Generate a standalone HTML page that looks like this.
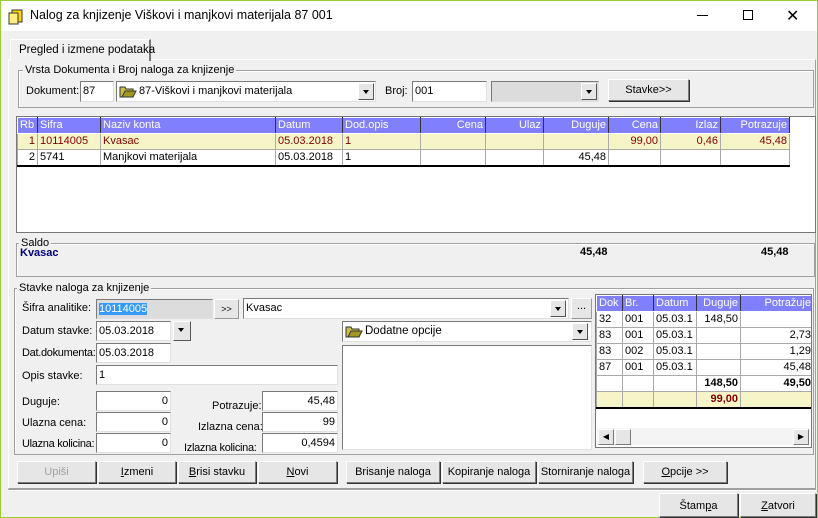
<!DOCTYPE html>
<html><head><meta charset="utf-8"><style>
*{box-sizing:border-box;margin:0;padding:0}
body{width:818px;height:518px;overflow:hidden;background:#f0f0f0;font-family:"Liberation Sans",Arial,sans-serif;font-size:11px;color:#000;position:relative}
.a{position:absolute;white-space:nowrap}
.win{position:absolute;left:0;top:0;width:818px;height:518px;border:1px solid #9acd32;border-top:none}
.tb{position:absolute;left:0;top:0;width:818px;height:31px;background:#fff;border-top:1px solid #9acd32}
.in{position:absolute;background:#fff;border:1px solid #7a7a7a;border-right-color:#e0e0e0;border-bottom-color:#e0e0e0;padding:1px 2px;line-height:16px;white-space:nowrap;overflow:hidden}
.r{text-align:right}
.btn{position:absolute;background:#e6e6e6;border:1px solid #fff;border-right-color:#7a7a7a;border-bottom-color:#7a7a7a;box-shadow:1px 1px 0 #333;text-align:center;line-height:20px;white-space:nowrap;overflow:hidden}
.grp{position:absolute;border:1px solid #a0a0a0;box-shadow:1px 1px 0 #fff inset}
.gl{position:absolute;background:#f0f0f0;padding:0 2px;top:-8px;left:4px;line-height:14px}
.dd{position:absolute;width:16px;background:#e6e6e6;border:1px solid #fff;border-right-color:#555;border-bottom-color:#555}
.dd:after{content:"";position:absolute;left:4px;top:6px;border:3px solid transparent;border-top:4px solid #000}
table{border-collapse:collapse;position:absolute;font-size:11px}
td{border:1px solid #aaa;padding:0 2px;height:16px;line-height:15px;white-space:nowrap;overflow:hidden}
tr.h td{background:#8080ff;color:#fff;border:1px solid #fff;border-right-color:#333}
tr.y td{background:#f5f5c8;color:#800000}
u{text-decoration:underline}
</style></head><body>
<div class="tb"></div>
<svg class="a" style="left:8px;top:9px" width="16" height="16"><rect x="4" y="1" width="10" height="12" fill="#ffd700" stroke="#333"/><rect x="1" y="4" width="9" height="11" fill="#ffef80" stroke="#333"/></svg>
<div class="a" style="left:30px;top:8px;font-size:12.5px">Nalog za knjizenje Viškovi i manjkovi materijala 87 001</div>
<div class="a" style="left:697px;top:15px;width:11px;height:1px;background:#000"></div>
<div class="a" style="left:743px;top:10px;width:10px;height:10px;border:1px solid #000"></div>
<div class="a" style="left:786px;top:6px;font-size:16px">✕</div>
<div class="win"></div>
<!-- tab -->
<div class="a" style="left:8px;top:59px;width:808px;height:430px;border:1px solid #fff;border-right-color:#a0a0a0;border-bottom-color:#a0a0a0"></div>
<div class="a" style="left:10px;top:39px;width:141px;height:22px;background:#f0f0f0;border:1px solid #fff;border-right:2px solid #777;border-bottom:none;padding:4px 0 0 8px;font-size:11.5px">Pregled i izmene podataka</div>
<!-- group 1 -->
<div class="grp" style="left:18px;top:70px;width:796px;height:38px"><div class="gl">Vrsta Dokumenta i Broj naloga za knjizenje</div></div>
<div class="a" style="left:26px;top:85px">Dokument:</div>
<div class="in" style="left:80px;top:81px;width:34px;height:21px">87</div>
<div class="in" style="left:116px;top:81px;width:260px;height:21px;padding-left:22px;line-height:17px">87-Viškovi i manjkovi materijala</div>
<svg class="a" style="left:119px;top:84px" width="18" height="14"><path d="M1 3h5l1 2h7v8H1z" fill="#c8c040" stroke="#333"/><path d="M3 13l3-6h11l-3 6z" fill="#a09820" stroke="#333"/></svg>
<div class="dd" style="left:358px;top:83px;height:17px"></div>
<div class="a" style="left:385px;top:85px">Broj:</div>
<div class="in" style="left:412px;top:81px;width:75px;height:21px">001</div>
<div class="in" style="left:491px;top:81px;width:108px;height:21px;background:#dcdcdc"></div>
<div class="dd" style="left:581px;top:83px;height:17px"></div>
<div class="btn" style="left:608px;top:79px;width:81px;height:22px">Stavke&gt;&gt;</div>
<!-- grid -->
<div class="a" style="left:16px;top:116px;width:800px;height:117px;background:#fff;border:1px solid #777"></div>
<table style="left:17px;top:117px;table-layout:fixed;width:772px">
<colgroup><col style="width:20px"><col style="width:63px"><col style="width:175px"><col style="width:67px"><col style="width:78px"><col style="width:65px"><col style="width:58px"><col style="width:65px"><col style="width:52px"><col style="width:60px"><col style="width:69px"></colgroup>
<tr class="h"><td>Rb</td><td>Sifra</td><td>Naziv konta</td><td>Datum</td><td>Dod.opis</td><td class="r">Cena</td><td class="r">Ulaz</td><td class="r">Duguje</td><td class="r">Cena</td><td class="r">Izlaz</td><td class="r">Potrazuje</td></tr>
<tr class="y"><td class="r">1</td><td>10114005</td><td>Kvasac</td><td>05.03.2018</td><td>1</td><td></td><td></td><td></td><td class="r">99,00</td><td class="r">0,46</td><td class="r">45,48</td></tr>
<tr style="border-bottom:2px solid #000"><td class="r">2</td><td>5741</td><td>Manjkovi materijala</td><td>05.03.2018</td><td>1</td><td></td><td></td><td class="r">45,48</td><td></td><td></td><td></td></tr>
</table>
<!-- saldo -->
<div class="grp" style="left:16px;top:243px;width:799px;height:34px"><div class="gl" style="left:2px">Saldo</div></div>
<div class="a" style="left:20px;top:247px;color:#000080;font-weight:bold">Kvasac</div>
<div class="a" style="left:580px;top:246px;font-weight:bold">45,48</div>
<div class="a" style="left:761px;top:246px;font-weight:bold">45,48</div>
<!-- stavke -->
<div class="grp" style="left:14px;top:288px;width:800px;height:167px"><div class="gl" style="left:2px">Stavke naloga za knjizenje</div></div>
<div class="a" style="left:22px;top:302px">Šifra analitike:</div>
<div class="in" style="left:96px;top:299px;width:117px;height:20px;background:#dcdcdc"><span style="background:#3399ff;color:#fff">10114005</span></div>
<div class="btn" style="left:214px;top:299px;width:25px;height:20px;font-size:9px;line-height:18px;box-shadow:none;border-color:#fff #999 #999 #fff">&gt;&gt;</div>
<div class="in" style="left:243px;top:298px;width:326px;height:21px">Kvasac</div>
<div class="dd" style="left:550px;top:300px;height:17px"></div>
<div class="btn" style="left:571px;top:298px;width:21px;height:21px;box-shadow:none;border-color:#fff #999 #999 #fff;line-height:14px">...</div>
<div class="a" style="left:22px;top:325px">Datum stavke:</div>
<div class="in" style="left:96px;top:321px;width:75px;height:20px">05.03.2018</div>
<div class="dd" style="left:173px;top:321px;height:20px;width:18px"></div>
<div class="a" style="left:22px;top:347px;letter-spacing:-0.3px">Dat.dokumenta:</div>
<div class="in" style="left:96px;top:343px;width:75px;height:20px">05.03.2018</div>
<div class="a" style="left:22px;top:370px">Opis stavke:</div>
<div class="in" style="left:96px;top:365px;width:242px;height:20px">1</div>
<div class="a" style="left:22px;top:396px">Duguje:</div>
<div class="in r" style="left:96px;top:391px;width:75px;height:20px">0</div>
<div class="a" style="left:22px;top:417px">Ulazna cena:</div>
<div class="in r" style="left:96px;top:412px;width:75px;height:20px">0</div>
<div class="a" style="left:22px;top:438px;letter-spacing:-0.3px">Ulazna kolicina:</div>
<div class="in r" style="left:96px;top:433px;width:75px;height:20px">0</div>
<div class="a" style="left:212px;top:400px">Potrazuje:</div>
<div class="in r" style="left:262px;top:391px;width:76px;height:20px">45,48</div>
<div class="a" style="left:198px;top:421px">Izlazna cena:</div>
<div class="in r" style="left:262px;top:412px;width:76px;height:20px">99</div>
<div class="a" style="left:184px;top:442px;letter-spacing:-0.3px">Izlazna kolicina:</div>
<div class="in r" style="left:262px;top:433px;width:76px;height:20px">0,4594</div>
<div class="in" style="left:342px;top:345px;width:250px;height:105px"></div>
<div class="in" style="left:342px;top:321px;width:250px;height:21px;padding-left:22px;line-height:17px;font-size:11.5px">Dodatne opcije</div>
<svg class="a" style="left:345px;top:324px" width="18" height="14"><path d="M1 3h5l1 2h7v8H1z" fill="#c8c040" stroke="#333"/><path d="M3 13l3-6h11l-3 6z" fill="#a09820" stroke="#333"/></svg>
<div class="dd" style="left:572px;top:323px;height:17px"></div>
<!-- right grid -->
<div class="a" style="left:595px;top:294px;width:217px;height:154px;background:#fff;border:1px solid #777;overflow:hidden">
<table style="left:0;top:0;table-layout:fixed;width:240px">
<colgroup><col style="width:26px"><col style="width:31px"><col style="width:43px"><col style="width:44px"><col style="width:96px"></colgroup>
<tr class="h"><td>Dok</td><td>Br.</td><td>Datum</td><td class="r">Duguje</td><td class="r" style="padding-right:25px">Potražuje</td></tr>
<tr><td>32</td><td>001</td><td>05.03.1</td><td class="r">148,50</td><td></td></tr>
<tr><td>83</td><td>001</td><td>05.03.1</td><td></td><td class="r" style="padding-right:25px">2,73</td></tr>
<tr><td>83</td><td>002</td><td>05.03.1</td><td></td><td class="r" style="padding-right:25px">1,29</td></tr>
<tr><td>87</td><td>001</td><td>05.03.1</td><td></td><td class="r" style="padding-right:25px">45,48</td></tr>
<tr style="font-weight:bold"><td></td><td></td><td></td><td class="r">148,50</td><td class="r" style="padding-right:25px">49,50</td></tr>
<tr class="y" style="font-weight:bold;border-bottom:2px solid #000"><td></td><td></td><td></td><td class="r">99,00</td><td></td></tr>
</table>
<div class="a" style="left:1px;top:133px;width:213px;height:17px;background:#f4f4f4"></div>
<div class="btn" style="left:2px;top:134px;width:16px;height:16px;box-shadow:none;font-size:8px;line-height:14px">◀</div>
<div class="btn" style="left:19px;top:134px;width:16px;height:16px;box-shadow:none"></div>
<div class="btn" style="left:197px;top:134px;width:16px;height:16px;box-shadow:none;font-size:8px;line-height:14px">▶</div>
</div>
<!-- buttons -->
<div class="btn" style="left:17px;top:461px;width:79px;height:22px;color:#a0a0a0">Upiši</div>
<div class="btn" style="left:98px;top:461px;width:78px;height:22px"><u>I</u>zmeni</div>
<div class="btn" style="left:178px;top:461px;width:78px;height:22px"><u>B</u>risi stavku</div>
<div class="btn" style="left:258px;top:461px;width:79px;height:22px"><u>N</u>ovi</div>
<div class="btn" style="left:346px;top:461px;width:94px;height:22px">Brisanje naloga</div>
<div class="btn" style="left:442px;top:461px;width:94px;height:22px">Kopiranje naloga</div>
<div class="btn" style="left:538px;top:461px;width:95px;height:22px">Storniranje naloga</div>
<div class="btn" style="left:643px;top:461px;width:84px;height:22px"><u>O</u>pcije &gt;&gt;</div>
<div class="a" style="left:8px;top:489px;width:808px;height:2px;border-top:1px solid #a0a0a0;border-bottom:1px solid #fff"></div>
<div class="btn" style="left:659px;top:493px;width:79px;height:24px;line-height:24px">Štam<u>p</u>a</div>
<div class="btn" style="left:740px;top:493px;width:76px;height:24px;line-height:24px"><u>Z</u>atvori</div>
</body></html>
